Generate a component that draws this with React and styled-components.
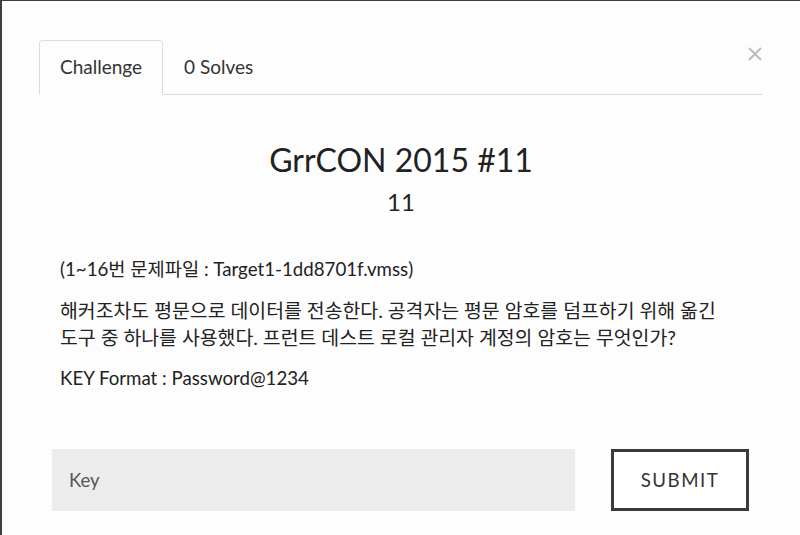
import styled, { createGlobalStyle } from "styled-components";

const GlobalStyle = createGlobalStyle`
  html, body {
    margin: 0;
    padding: 0;
    background: #3b3f3c;
  }
  body {
    font-family: Lato, "Noto Sans CJK KR", sans-serif;
  }
`;

const Modal = styled.div`
  margin: 1px 0 0 2px;
  width: 798px;
  height: 534px;
  background: #fdfdfd;
  color: #222;
  box-sizing: border-box;
  padding: 38px 37px 0 37px;
  display: flex;
  flex-direction: column;
`;

const TabBar = styled.div`
  display: flex;
  align-items: flex-end;
  border-bottom: 1px solid #dcdcdc;
  height: 55px;
`;

const Tab = styled.div`
  height: 55px;
  box-sizing: border-box;
  padding: 0 20px 2px;
  display: flex;
  align-items: center;
  font-size: 19px;
  color: #333;
  margin-bottom: -1px;
  border: 1px solid ${(p) => (p.active ? "#dcdcdc" : "transparent")};
  border-bottom-color: ${(p) => (p.active ? "#fdfdfd" : "transparent")};
  border-radius: 4px 4px 0 0;
  background: ${(p) => (p.active ? "#fdfdfd" : "transparent")};
`;

const Close = styled.button`
  margin-left: auto;
  align-self: flex-start;
  margin-top: 8px;
  margin-right: 1px;
  padding: 0;
  border: none;
  background: none;
  width: 14px;
  height: 14px;
  display: flex;
`;

const Heading = styled.div`
  display: flex;
  flex-direction: column;
  align-items: center;
  margin-top: 45px;
`;

const Title = styled.h1`
  margin: 0;
  font-size: 32px;
  font-weight: 400;
  line-height: 40px;
  color: #222;
`;

const Value = styled.div`
  font-size: 24px;
  line-height: 30px;
  margin-top: 7px;
  color: #222;
`;

const Description = styled.div`
  padding: 0 21px;
  margin-top: 39px;
  font-size: 18.7px;
  line-height: 27px;
`;

const Para = styled.p`
  margin: 0 0 ${(p) => p.gap || 10}px;
  font-size: ${(p) => p.size || "inherit"};
`;

const Form = styled.div`
  display: flex;
  gap: 36px;
  padding: 0 14px 0 13px;
  margin-top: 47px;
`;

const KeyInput = styled.input`
  flex: 1;
  height: 62px;
  box-sizing: border-box;
  border: none;
  background: #ececec;
  padding: 0 17px;
  font-family: Lato, sans-serif;
  font-size: 18.5px;
  color: #333;
  outline: none;
  &::placeholder {
    color: #555;
  }
`;

const Submit = styled.button`
  width: 138px;
  height: 62px;
  box-sizing: border-box;
  border: 3px solid #3a3a3a;
  background: #fff;
  font-family: Lato, sans-serif;
  font-size: 18.7px;
  letter-spacing: 1.5px;
  color: #333;
  padding: 0;
`;

export default function App() {
  return (
    <>
      <GlobalStyle />
      <Modal>
        <TabBar>
          <Tab active>Challenge</Tab>
          <Tab>0 Solves</Tab>
          <Close aria-label="close">
            <svg width="14" height="14" viewBox="0 0 14 14">
              <path d="M1 1L13 13M13 1L1 13" stroke="#bcbcbc" strokeWidth="2" />
            </svg>
          </Close>
        </TabBar>
        <Heading>
          <Title>GrrCON 2015 #11</Title>
          <Value>11</Value>
        </Heading>
        <Description>
          <Para gap={14}>(1~16번 문제파일 : Target1-1dd8701f.vmss)</Para>
          <Para gap={14} size="19.4px">
            해커조차도 평문으로 데이터를 전송한다. 공격자는 평문 암호를 덤프하기 위해 옮긴
            <br />
            도구 중 하나를 사용했다. 프런트 데스트 로컬 관리자 계정의 암호는 무엇인가?
          </Para>
          <Para>KEY Format : Password@1234</Para>
        </Description>
        <Form>
          <KeyInput placeholder="Key" />
          <Submit>SUBMIT</Submit>
        </Form>
      </Modal>
    </>
  );
}
